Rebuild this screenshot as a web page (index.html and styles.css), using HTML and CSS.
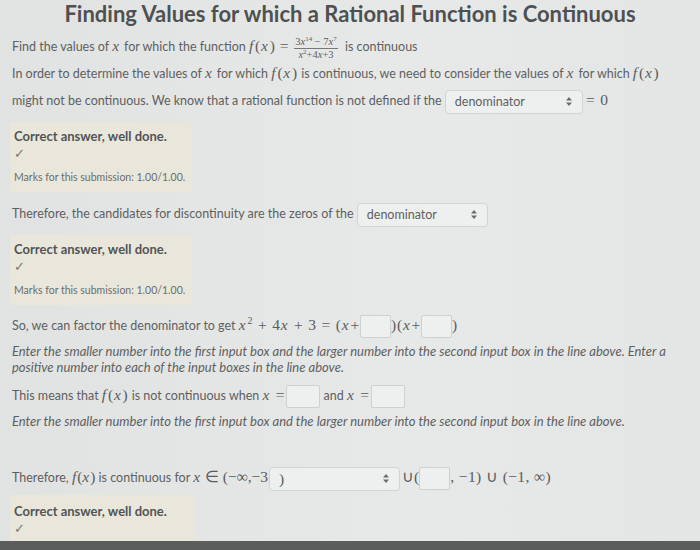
FILE: index.html
```html
<!DOCTYPE html>
<html lang="en">
<head>
  <meta charset="UTF-8" />
  <title>Finding Values for which a Rational Function is Continuous</title>
  <link rel="stylesheet" href="styles.css">
</head>
<body>

<div class="page">
  <h1 class="title">Finding Values for which a Rational Function is Continuous</h1>

  <p class="line first">
    Find the values of <i class="m">x</i> for which the function <span class="m"><i>f</i>(<i>x</i>)<span class="eq">=</span></span><span class="frac">
      <span class="num">3<i>x</i><sup>14</sup> − 7<i>x</i><sup>7</sup></span>
      <span class="den"><i>x</i><sup>2</sup>+4<i>x</i>+3</span>
    </span>
    is continuous
  </p>

  <p class="line wide">
    In order to determine the values of <i class="m">x</i> for which <span class="m"><i>f</i>(<i>x</i>)</span> is continuous, we need to consider the values of <i class="m">x</i> for which <span class="m"><i>f</i>(<i>x</i>)</span><br>
    might not be continuous. We know that a rational function is not defined if the
    <span class="select w1">denominator<svg class="arrows" width="6" height="9" viewBox="0 0 6 9"><path d="M3 0L6 3.5H0Z M3 9L0 5.5H6Z"/></svg></span>
    <span class="m">= 0</span>
  </p>

  <div class="feedback">
    <div class="fb-title">Correct answer, well done.</div>
    <div class="tick">&#10003;</div>
    <div class="marks">Marks for this submission: 1.00/1.00.</div>
  </div>

  <p class="line after-fb">
    Therefore, the candidates for discontinuity are the zeros of the
    <span class="select w2">denominator<svg class="arrows" width="6" height="9" viewBox="0 0 6 9"><path d="M3 0L6 3.5H0Z M3 9L0 5.5H6Z"/></svg></span>
  </p>

  <div class="feedback second">
    <div class="fb-title">Correct answer, well done.</div>
    <div class="tick">&#10003;</div>
    <div class="marks">Marks for this submission: 1.00/1.00.</div>
  </div>

  <p class="line after-fb2">
    So, we can factor the denominator to get <span class="m"><i>x</i><sup>2</sup> + 4<i>x</i> + 3 = (<i>x</i>+</span><span class="box"></span><span class="m">)(<i>x</i>+</span><span class="box"></span><span class="m">)</span>
  </p>
  <p class="hint">Enter the smaller number into the first input box and the larger number into the second input box in the line above. Enter a positive number into each of the input boxes in the line above.</p>

  <p class="line after-hint">
    This means that <span class="m"><i>f</i>(<i>x</i>)</span> is not continuous when <span class="m"><i>x</i> =</span><span class="box wide-box"></span> and <span class="m"><i>x</i> =</span><span class="box wide-box"></span>
  </p>
  <p class="hint">Enter the smaller number into the first input box and the larger number into the second input box in the line above.</p>

  <p class="line last">
    Therefore, <span class="m tight"><i>f</i>(<i>x</i>)</span> is continuous for <span class="m tight"><i>x</i> ∈ (−∞,−3</span><span class="select w3"><span class="m">)</span><svg class="arrows" width="6" height="9" viewBox="0 0 6 9"><path d="M3 0L6 3.5H0Z M3 9L0 5.5H6Z"/></svg></span><span class="m tight">∪(</span><span class="box"></span><span class="m">, −1) ∪ (−1, ∞)</span>
  </p>

  <div class="feedback third">
    <div class="fb-title">Correct answer, well done.</div>
    <div class="tick">&#10003;</div>
  </div>
</div>

<footer class="bar"></footer>

</body>
</html>
```

FILE: styles.css
```css
body {
  margin: 0;
  font-family: Lato, 'Liberation Sans', sans-serif;
  color: #5e6060;
  background: linear-gradient(90deg, #e1e3e2, #e7e9e9 60%, #e4e6e6);
  height: 550px;
  overflow: hidden;
  display: flex;
  flex-direction: column;
}

.page {
  flex: 1;
  padding: 0 12px;
}

.title {
  margin: 0;
  text-align: center;
  font-size: 22px;
  font-weight: bold;
  color: #4f5151;
  line-height: 28px;
}

.line {
  margin: 0;
  font-size: 12.5px;
  line-height: 26px;
  white-space: nowrap;
}

.line.first {
  margin-top: 5px;
}

.line.wide {
  margin-top: 0;
}

.m {
  font-family: 'Liberation Serif', serif;
  font-size: 15.5px;
  letter-spacing: 0.8px;
  color: #5a5c5c;
}

.m i, i.m {
  font-style: italic;
  padding-right: 1px;
}

.eq {
  margin: 0 5px 0 4px;
}

sup {
  font-size: 10px;
  line-height: 0;
}

.frac {
  display: inline-flex;
  flex-direction: column;
  align-items: center;
  vertical-align: middle;
  font-family: 'Liberation Serif', serif;
  font-size: 10.5px;
  line-height: 11px;
  margin: 0 4px 0 0;
}

.frac .num {
  border-bottom: 1px solid #777;
  padding: 0 1px 1px;
}

.frac sup {
  font-size: 7px;
}

.select {
  display: inline-flex;
  align-items: center;
  justify-content: space-between;
  box-sizing: border-box;
  height: 24px;
  padding: 0 10px 0 9px;
  background: #eef0f0;
  border: 1px solid #d2d4d4;
  border-radius: 4px;
  vertical-align: middle;
  font-size: 12.5px;
  color: #5e6060;
}

.select.w1 { width: 138px; }
.select.w2 { width: 131px; }
.select.w3 { width: 131px; margin-left: 1px; margin-right: 2px; }

.arrows {
  fill: #6a6c6c;
}

.box {
  display: inline-block;
  width: 31px;
  height: 23px;
  box-sizing: border-box;
  background: #eef0f0;
  border: 1px solid #cfd1d1;
  border-radius: 2px;
  vertical-align: middle;
}

.box.wide-box {
  width: 34px;
  margin-left: 1px;
}

.feedback {
  box-sizing: border-box;
  width: 182px;
  margin: 8px 0 0 -2px;
  padding: 6px 4px 8px 4px;
  background: #e9e7dc;
}

.fb-title {
  font-size: 13px;
  font-weight: bold;
  line-height: 16px;
  color: #525454;
}

.tick {
  font-size: 13px;
  line-height: 18px;
  color: #777;
}

.marks {
  margin-top: 8px;
  font-size: 10.5px;
  line-height: 14px;
  color: #6b6d6d;
}

.line.after-fb {
  margin-top: 9px;
}

.feedback.second {
  margin-top: 8px;
}

.line.after-fb2 {
  margin-top: 7px;
}

.hint {
  margin: 4px 0 0;
  font-size: 13px;
  font-style: italic;
  line-height: 16px;
}

.line.after-hint {
  margin-top: 7px;
}

.line.last {
  margin-top: 35px;
}

.line.last .m {
  letter-spacing: 0.4px;
}

.line.last .m.tight {
  letter-spacing: 0;
}

.feedback.third {
  margin-top: 4px;
  padding: 8px 4px 4px;
  width: 185px;
}

.bar {
  height: 9px;
  flex-shrink: 0;
  background: #5b5c5c;
}
```
